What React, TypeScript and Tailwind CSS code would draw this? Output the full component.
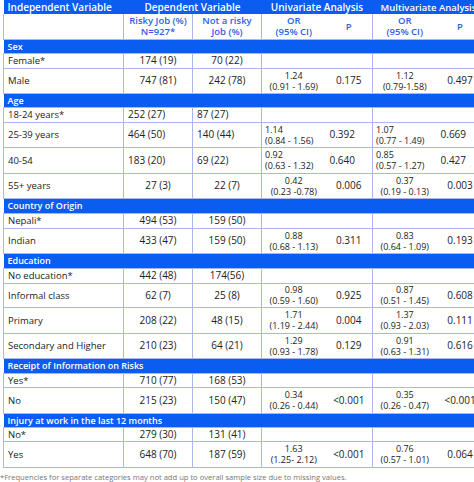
import { type FC, Fragment } from 'react';

type Row = {
  label: string;
  risky: string;
  notRisky: string;
  uniOr?: [string, string];
  uniP?: string;
  multiOr?: [string, string];
  multiP?: string;
  left?: boolean;
  h: number;
};

type Section = { title: string; h: number; rows: Row[] };

const sections: Section[] = [
  {
    title: 'Sex',
    h: 14,
    rows: [
      { label: 'Female*', risky: '174 (19)', notRisky: '70 (22)', h: 15 },
      { label: 'Male', risky: '747 (81)', notRisky: '242 (78)', uniOr: ['1.24', '(0.91 - 1.69)'], uniP: '0.175', multiOr: ['1.12', '(0.79-1.58)'], multiP: '0.497', h: 25 },
    ],
  },
  {
    title: 'Age',
    h: 14,
    rows: [
      { label: '18-24 years*', risky: '252 (27)', notRisky: '87 (27)', left: true, h: 15 },
      { label: '25-39 years', risky: '464 (50)', notRisky: '140 (44)', uniOr: ['1.14', '(0.84 - 1.56)'], uniP: '0.392', multiOr: ['1.07', '(0.77 - 1.49)'], multiP: '0.669', left: true, h: 25 },
      { label: '40-54', risky: '183 (20)', notRisky: '69 (22)', uniOr: ['0.92', '(0.63 - 1.32)'], uniP: '0.640', multiOr: ['0.85', '(0.57 - 1.27)'], multiP: '0.427', left: true, h: 26 },
      { label: '55+ years', risky: '27 (3)', notRisky: '22 (7)', uniOr: ['0.42', '(0.23 -0.78)'], uniP: '0.006', multiOr: ['0.37', '(0.19 - 0.13)'], multiP: '0.003', h: 25 },
    ],
  },
  {
    title: 'Country of Origin',
    h: 15,
    rows: [
      { label: 'Nepali*', risky: '494 (53)', notRisky: '159 (50)', h: 15 },
      { label: 'Indian', risky: '433 (47)', notRisky: '159 (50)', uniOr: ['0.88', '(0.68 - 1.13)'], uniP: '0.311', multiOr: ['0.83', '(0.64 - 1.09)'], multiP: '0.193', h: 25 },
    ],
  },
  {
    title: 'Education',
    h: 15,
    rows: [
      { label: 'No education*', risky: '442 (48)', notRisky: '174(56)', h: 15 },
      { label: 'Informal class', risky: '62 (7)', notRisky: '25 (8)', uniOr: ['0.98', '(0.59 - 1.60)'], uniP: '0.925', multiOr: ['0.87', '(0.51 - 1.45)'], multiP: '0.608', h: 24 },
      { label: 'Primary', risky: '208 (22)', notRisky: '48 (15)', uniOr: ['1.71', '(1.19 - 2.44)'], uniP: '0.004', multiOr: ['1.37', '(0.93 - 2.03)'], multiP: '0.111', h: 26 },
      { label: 'Secondary and Higher', risky: '210 (23)', notRisky: '64 (21)', uniOr: ['1.29', '(0.93 - 1.78)'], uniP: '0.129', multiOr: ['0.91', '(0.63 - 1.31)'], multiP: '0.616', h: 25 },
    ],
  },
  {
    title: 'Receipt of Information on Risks',
    h: 15,
    rows: [
      { label: 'Yes*', risky: '710 (77)', notRisky: '168 (53)', h: 14 },
      { label: 'No', risky: '215 (23)', notRisky: '150 (47)', uniOr: ['0.34', '(0.26 - 0.44)'], uniP: '<0.001', multiOr: ['0.35', '(0.26 - 0.47)'], multiP: '<0.001', h: 26 },
    ],
  },
  {
    title: 'Injury at work in the last 12 months',
    h: 14,
    rows: [
      { label: 'No*', risky: '279 (30)', notRisky: '131 (41)', h: 14 },
      { label: 'Yes', risky: '648 (70)', notRisky: '187 (59)', uniOr: ['1.63', '(1.25- 2.12)'], uniP: '<0.001', multiOr: ['0.76', '(0.57 - 1.01)'], multiP: '0.064', h: 26 },
    ],
  },
];

const line = 'border-[#a9b7ec]';

const OrCell: FC<{ v?: [string, string]; left?: boolean }> = ({ v, left }) => (
  <td className={`p-0 text-[9px] leading-[11px] ${left ? 'text-left pl-[3px]' : 'text-center'}`}>
    {v && (
      <>
        <div>{v[0]}</div>
        <div>{v[1]}</div>
      </>
    )}
  </td>
);

export default function App() {
  return (
    <div
      className="w-[474px] h-[482px] overflow-hidden bg-white text-[#222]"
      style={{ fontFamily: '"Open Sans", Lato, sans-serif' }}
    >
      <table className="ml-[3px] table-fixed w-[480px] text-[10px] leading-[11px]">
        <colgroup>
          <col className="w-[120px]" />
          <col className="w-[69px]" />
          <col className="w-[69px]" />
          <col className="w-[64px]" />
          <col className="w-[47px]" />
          <col className="w-[64px]" />
          <col className="w-[47px]" />
        </colgroup>
        <thead>
          <tr className="h-[14px] bg-[#0b5cf0] text-white text-[10px]">
            <th className="p-0 pl-[4px] text-left font-semibold">Independent Variable</th>
            <th colSpan={2} className="p-0 text-center font-semibold">Dependent Variable</th>
            <th colSpan={2} className="p-0 text-center font-semibold">Univariate Analysis</th>
            <th colSpan={2} className="p-0 text-left font-semibold text-[9.5px] pl-[8px] whitespace-nowrap">Multivariate Analysis</th>
          </tr>
          <tr className={`h-[25px] text-[#2c5fe3] text-[9.5px] leading-[11px] border-l ${line}`}>
            <th className={`p-0 border-r ${line}`}></th>
            <th className={`p-0 text-center font-semibold border-r ${line}`}>
              Risky Job (%)
              <br />
              N=927*
            </th>
            <th className={`p-0 text-center font-semibold border-r ${line}`}>
              Not a risky
              <br />
              Job (%)
            </th>
            <th className="p-0 text-center font-semibold">
              OR
              <br />
              (95% CI)
            </th>
            <th className={`p-0 text-center font-semibold border-r ${line}`}>P</th>
            <th className="p-0 text-center font-semibold">
              OR
              <br />
              (95% CI)
            </th>
            <th className="p-0 text-center font-semibold">P</th>
          </tr>
        </thead>
        <tbody>
          {sections.map((s) => (
            <Fragment key={s.title}>
              <tr style={{ height: s.h }} className={`bg-[#0b5cf0] text-white border-y ${line}`}>
                <td colSpan={7} className="p-0 pl-[4px] text-[9px] font-semibold whitespace-nowrap">
                  {s.title}
                </td>
              </tr>
              {s.rows.map((r) => (
                <tr key={r.label} style={{ height: r.h }} className={`border-b border-l ${line}`}>
                  <td className={`p-0 pl-[4px] text-[9.5px] border-r ${line}`}>{r.label}</td>
                  <td className={`p-0 border-r ${line} ${r.left ? 'text-left pl-[4px]' : 'text-center'}`}>{r.risky}</td>
                  <td className={`p-0 border-r ${line} ${r.left ? 'text-left pl-[4px]' : 'text-center'}`}>{r.notRisky}</td>
                  <OrCell v={r.uniOr} left={r.left} />
                  <td className={`p-0 border-r ${line} ${r.left ? 'text-left pl-[4px]' : 'text-center'}`}>{r.uniP}</td>
                  <OrCell v={r.multiOr} left={r.left} />
                  <td className={`p-0 ${r.left ? 'text-left pl-[4px]' : 'text-center'}`}>{r.multiP}</td>
                </tr>
              ))}
            </Fragment>
          ))}
        </tbody>
      </table>
      <p className="mt-[4px] text-[7.6px] text-[#777] leading-[10px] whitespace-nowrap">
        *Frequencies for separate categories may not add up to overall sample size due to missing values.
      </p>
    </div>
  );
}
